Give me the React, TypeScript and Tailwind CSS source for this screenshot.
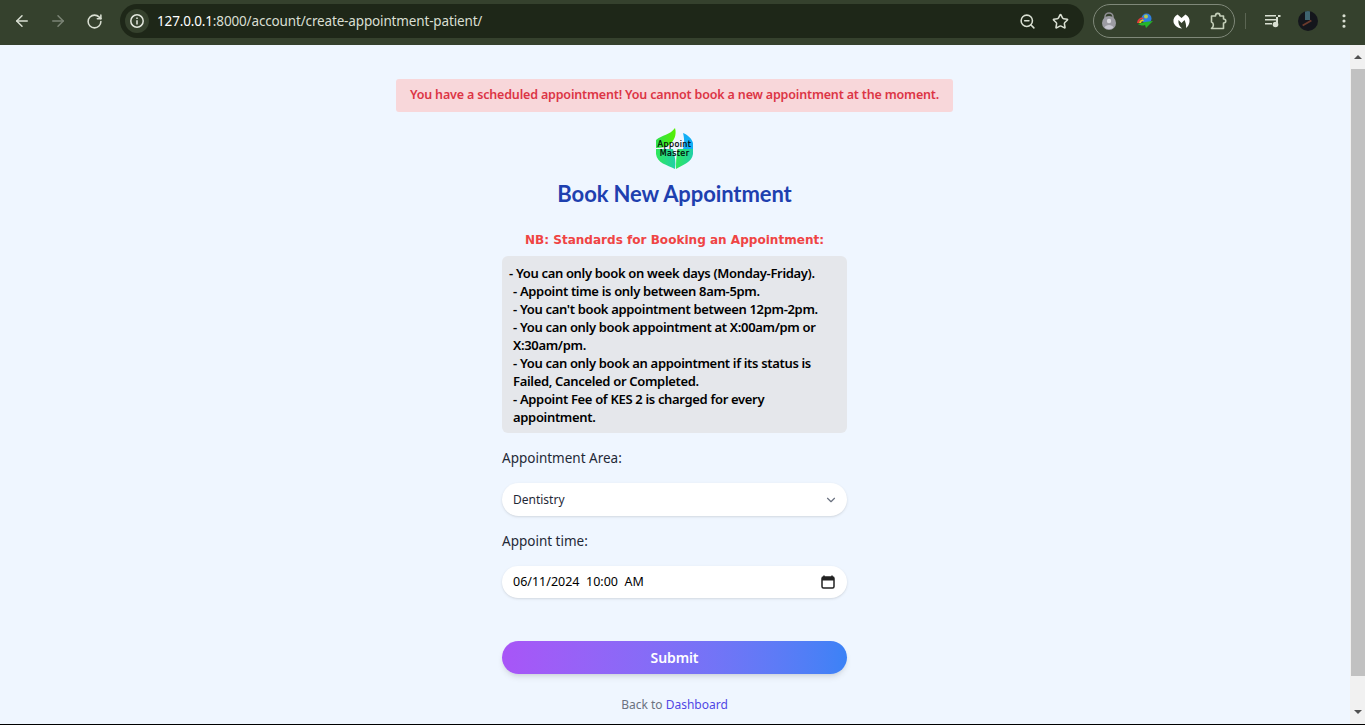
import { ArrowLeft, ArrowRight, ChevronDown, EllipsisVertical, RotateCw, Star, ZoomOut } from "lucide-react";

function Logo() {
	return (
		<svg width="42" height="44" viewBox="0 0 42 44">
			<defs>
				<linearGradient id="leftLeaf" x1="0" y1="0" x2="1" y2="0">
					<stop offset="0" stopColor="#2ee04f" />
					<stop offset="1" stopColor="#55f000" />
				</linearGradient>
				<linearGradient id="bottomLeaf" x1="0" y1="0" x2="1" y2="0">
					<stop offset="0" stopColor="#30e85a" />
					<stop offset="1" stopColor="#1fcfa8" />
				</linearGradient>
			</defs>
			<path d="M2 13 C8 8 16 8 21 1 C23 8 20 14 15 18 C12 20 8 21 2 21 Z" fill="url(#leftLeaf)" />
			<path d="M29 6 C34 8 38 12 39 16 V22 H29 C31 16 30 10 29 6 Z" fill="#12aef5" />
			<path d="M2 22 H19 C21 29 22 36 21 42 C13 38 3 36 2 27 Z" fill="url(#bottomLeaf)" />
			<path d="M24 22 H39 V27 C38 35 29 38 22 42 C22 36 22 29 24 22 Z" fill="url(#bottomLeaf)" />
			<text x="20.5" y="19.5" textAnchor="middle" fontFamily="DejaVu Sans, sans-serif" fontSize="8" letterSpacing="0.4" stroke="#000" strokeWidth="0.2" fill="#000">Appoint</text>
			<text x="20.5" y="29" textAnchor="middle" fontFamily="DejaVu Sans, sans-serif" fontSize="8" letterSpacing="0.4" stroke="#000" strokeWidth="0.2" fill="#000">Master</text>
		</svg>
	);
}

function BrowserBar() {
	return (
		<div className="h-[45px] pb-[3px] bg-[#35412d] flex items-center text-[#d9dfd2] font-['Noto_Sans',sans-serif] relative">
			<div className="w-[120px] flex items-center pl-[13px] gap-[18px] shrink-0">
				<ArrowLeft size={18} strokeWidth={2} />
				<ArrowRight size={18} strokeWidth={2} className="text-[#7b8475]" />
				<RotateCw size={17} strokeWidth={2.2} className="ml-[1px]" />
			</div>
			<div className="w-[964px] h-[34px] rounded-full bg-[#1e2718] flex items-center pl-[5px] pr-[15px] shrink-0">
				<div className="w-[24px] h-[24px] rounded-full bg-[#35412d] flex items-center justify-center">
					<svg width="16" height="16" viewBox="0 0 16 16" fill="none" stroke="#e4e8df" strokeWidth="1.5">
						<circle cx="8" cy="8" r="6.2" />
						<path d="M8 7.2V11.5M8 4.5V6" />
					</svg>
				</div>
				<span className="ml-[8px] text-[13.5px] tracking-[-0.15px]">
					<span className="text-white">127.0.0.1</span>
					<span>:8000/account/create-appointment-patient/</span>
				</span>
				<ZoomOut size={17} strokeWidth={2.2} className="ml-auto" />
				<Star size={17} strokeWidth={2.2} className="ml-[16px]" />
			</div>
			<div className="ml-[9px] w-[142px] h-[34px] rounded-full border border-[#7f8879] flex items-center justify-between pl-[7px] pr-[7px] shrink-0">
				<svg width="16" height="18" viewBox="0 0 16 18">
					<path d="M4 7V5a4 4 0 0 1 8 0v2" fill="none" stroke="#8f8f93" strokeWidth="1.6" />
					<circle cx="8" cy="11" r="7" fill="#9c9ca3" />
					<circle cx="8" cy="9" r="2.2" fill="#dadade" />
					<path d="M3.5 15.5c1-3.5 8-3.5 9 0c-2 2-7 2-9 0z" fill="#c7c7d0" />
				</svg>
				<svg width="18" height="16" viewBox="0 0 18 16">
					<circle cx="10.5" cy="5.5" r="5" fill="#2f7fe0" />
					<circle cx="10" cy="3.5" r="2" fill="#b8c94a" />
					<path d="M1 10a5.5 5.5 0 0 1 6-5.5l1 1.500a4 4 0 0 0-5 4z" fill="#e23b3b" />
					<path d="M3 10a4 4 0 0 1 4-3.500l1 1.500a2.500 2.500 0 0 0-3 2z" fill="#f2c21a" />
					<path d="M2 11c2 1.500 5 2 7 1l1 3 7-7-8 1c-2 1-5 1-7 2z" fill="#25b52b" />
				</svg>
				<svg width="17" height="15" viewBox="0 0 17 15">
					<path d="M4.500 0.500 L8.500 4 L12.500 0.500 C15.500 2 17 5 16.500 8 C16 11 14.500 13 13 14 C13.500 11 12.500 8 11.500 6 L8.500 9 L5.500 6 C5 9 6 12 9 14.500 C5 14.500 1 11 0.500 8 C0 5 1.500 2 4.500 0.500Z" fill="#fff" />
				</svg>
				<svg width="18" height="18" viewBox="0 0 18 18" fill="none" stroke="#c5d0ba" strokeWidth="1.6" strokeLinejoin="round">
					<path d="M2.500 4H6.500C6.500 0.500 11 0.500 11 4H14.500V7C17.500 7 17.500 11 14.500 11V16.500H2.500C5 15 5 11 2.500 10Z" />
				</svg>
			</div>
			<div className="ml-[10px] w-px h-[16px] bg-[#5b6553] shrink-0" />
			<svg width="16" height="14" viewBox="0 0 16 14" className="ml-[19px] shrink-0" fill="#d9dfd2">
				<path d="M0 1h11v1.500H0zM0 5h11v1.500H0zM0 9h7v1.500H0z" />
				<path d="M11 3h4.500V1H13v8h-2z" />
				<circle cx="10.500" cy="10.500" r="2.800" />
			</svg>
			<div className="ml-[17px] w-[20px] h-[20px] rounded-full bg-[#14161c] relative overflow-hidden shrink-0">
				<div className="absolute left-[7px] top-0 w-[5px] h-[9px] bg-[#3f6470]" />
				<div className="absolute left-[4px] top-[11px] w-[10px] h-[2px] bg-[#6b3a2c] rotate-[-30deg]" />
			</div>
			<EllipsisVertical size={18} strokeWidth={2.2} className="ml-[17px] shrink-0" />
		</div>
	);
}

function Scrollbar() {
	return (
		<div className="w-[15px] bg-[#f1f1f1] flex flex-col items-center shrink-0">
			<div className="h-[24px] w-full flex items-center justify-center">
				<div className="w-0 h-0 border-x-[4px] border-x-transparent border-b-[4px] border-b-[#505050]" />
			</div>
			<div className="h-[607px] w-full pl-[1px]">
				<div className="h-full bg-[#c1c1c1]" />
			</div>
			<div className="mt-auto h-[24px] w-full flex items-center justify-center">
				<div className="w-0 h-0 border-x-[4px] border-x-transparent border-t-[4px] border-t-[#505050]" />
			</div>
		</div>
	);
}

export default function App() {
	return (
		<div className="h-[725px] w-[1365px] overflow-hidden flex flex-col border-b border-b-black font-['Noto_Sans',sans-serif]">
			<BrowserBar />
			<div className="flex flex-1 min-h-0 bg-[#eff6ff]">
				<main className="flex-1 flex flex-col items-center pt-[34px] pr-[1px]">
					<div className="w-[557px] h-[33px] bg-[#f8d7da] rounded-[3px] flex items-center justify-center whitespace-nowrap text-[12.5px] tracking-[-0.17px] font-semibold text-[#dc3545]">
						You have a scheduled appointment! You cannot book a new appointment at the moment.
					</div>
					<div className="mt-[15px]">
						<Logo />
					</div>
					<h1 className="mt-[7px] text-[22px] leading-[32px] font-bold text-[#1e40af] font-['Lato',sans-serif] tracking-[-0.1px]">Book New Appointment</h1>
					<p className="mt-[20px] text-[12.05px] leading-[20px] font-bold text-[#ef4444] font-['DejaVu_Sans',sans-serif]">NB: Standards for Booking an Appointment:</p>
					<div className="mt-[6px] w-[345px]">
						<div className="bg-[#e5e7eb] rounded-[6px] pl-[7px] pr-[11px] pt-[8px] pb-[7px] text-[13px] tracking-[-0.33px] leading-[18px] font-semibold text-black">
							<p>- You can only book on week days (Monday-Friday).</p>
							<p className="pl-[4px]">- Appoint time is only between 8am-5pm.</p>
							<p className="pl-[4px]">- You can't book appointment between 12pm-2pm.</p>
							<p className="pl-[4px]">- You can only book appointment at X:00am/pm or X:30am/pm.</p>
							<p className="pl-[4px]">- You can only book an appointment if its status is Failed, Canceled or Completed.</p>
							<p className="pl-[4px]">- Appoint Fee of KES 2 is charged for every appointment.</p>
						</div>
						<label className="block mt-[15px] text-[13.5px] leading-[20px] text-[#1f2937]">Appointment Area:</label>
						<div className="mt-[15px] h-[33px] bg-white rounded-full shadow-sm flex items-center justify-between pl-[11px] pr-[9px] text-[12px] text-[#1f2937]">
							<span className="pt-[1px]">Dentistry</span>
							<ChevronDown size={14} strokeWidth={2} className="text-[#6b7280]" />
						</div>
						<label className="block mt-[15px] text-[13.5px] leading-[20px] text-[#1f2937]">Appoint time:</label>
						<div className="mt-[15px] h-[32px] bg-white rounded-full shadow-sm flex items-center justify-between pl-[11px] pr-[12px] text-[12.5px] text-black">
							<span className="whitespace-pre">06/11/2024  10:00  AM</span>
							<svg width="14" height="14" viewBox="0 0 14 14" fill="none">
								<path d="M3 0.500V2M11 0.500V2" stroke="#222" strokeWidth="1.500" />
								<rect x="1" y="2" width="12" height="11" rx="1.500" stroke="#222" strokeWidth="1.500" />
								<rect x="1" y="2" width="12" height="3.500" fill="#222" />
							</svg>
						</div>
						<button className="mt-[43px] w-full h-[33px] rounded-full bg-gradient-to-r from-[#a855f7] to-[#3b82f6] shadow-md text-white text-[14px] tracking-[-0.1px] font-semibold">Submit</button>
						<p className="mt-[21px] text-center text-[12px] leading-[20px] text-[#6b7280]">
							Back to <a className="text-[#4f46e5]">Dashboard</a>
						</p>
					</div>
				</main>
				<Scrollbar />
			</div>
		</div>
	);
}
